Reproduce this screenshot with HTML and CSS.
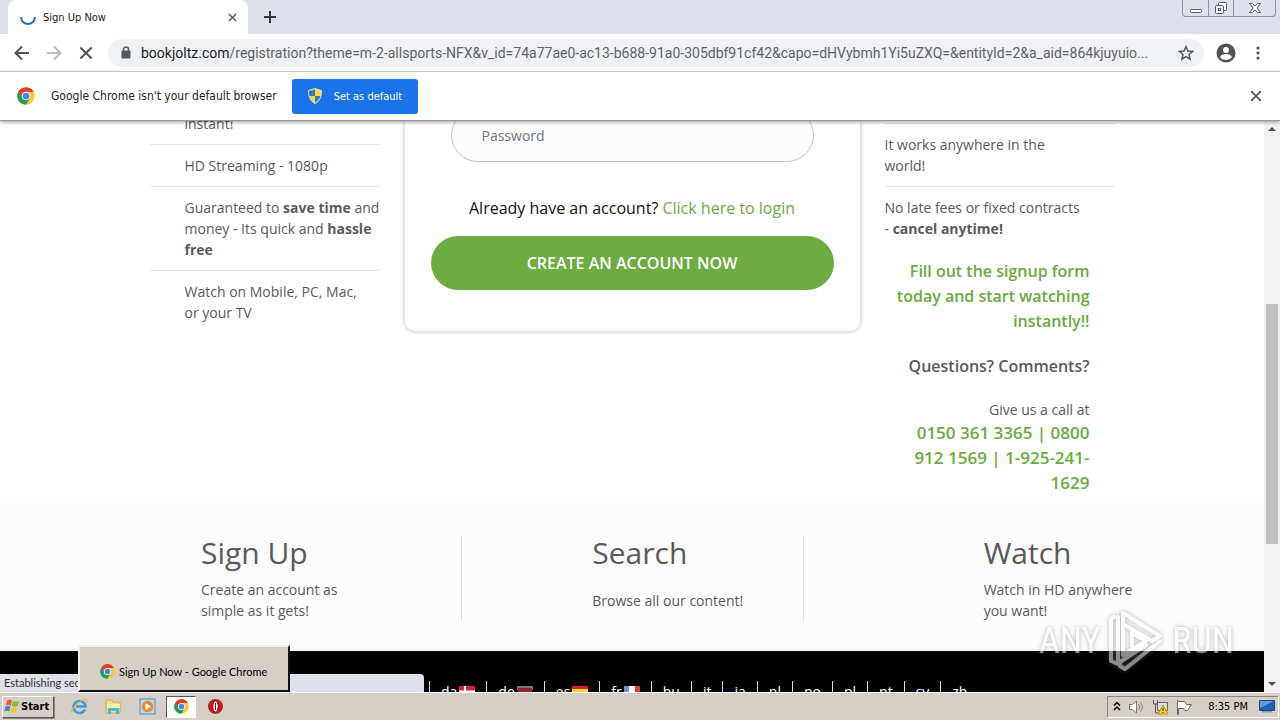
FILE: index.html
```
<!DOCTYPE html>
<html lang="en">
<head>
  <meta charset="UTF-8">
  <title>Sign Up Now</title>
  <link rel="stylesheet" href="styles.css">
</head>
<body>
  <svg class="defs" aria-hidden="true">
    <symbol id="chrome" viewBox="0 0 48 48">
      <circle cx="24" cy="24" r="23" fill="#fbc928"/>
      <path d="M24 24 4.100 12.500A23 23 0 0 1 43.900 12.500H24Z" fill="#df3b30"/>
      <path d="M4.100 12.500A23 23 0 0 0 24 47L34 29.800 24 24 14 29.800Z" fill="#1fa05a"/>
      <path d="M4.100 12.500A23 23 0 0 1 43.900 12.500H24L14 29.800Z" fill="#df3b30"/>
      <path d="M4.100 12.500 14 29.800 24 35.500 17.500 46A23 23 0 0 1 4.100 12.500Z" fill="#1fa05a"/>
      <circle cx="24" cy="24" r="11.500" fill="#fff"/>
      <circle cx="24" cy="24" r="9" fill="#4285f4"/>
    </symbol>
    <symbol id="cross" viewBox="0 0 10 10">
      <path d="M1 1l8 8M9 1l-8 8" fill="none" stroke="currentColor" stroke-width="1.500"/>
    </symbol>
  </svg>

  <header class="tabstrip">
    <div class="tab">
      <svg class="spinner" viewBox="0 0 16 16"><path d="M1 8a7 7 0 0 0 14 0" fill="none" stroke="#3268c8" stroke-width="2"/></svg>
      <span class="tab-title">Sign Up Now</span>
      <button class="icon-btn" aria-label="Close tab"><svg width="9" height="9"><use href="#cross"/></svg></button>
    </div>
    <button class="icon-btn new-tab" aria-label="New tab"><svg width="12" height="12" viewBox="0 0 12 12"><path d="M6 0v12M0 6h12" stroke="#333" stroke-width="2"/></svg></button>
    <div class="window-buttons">
      <button aria-label="Minimize"><svg width="14" height="14" viewBox="0 0 14 14"><rect x="1.500" y="8.500" width="11" height="3" rx="1" fill="#fff" stroke="#555b66"/></svg></button>
      <button aria-label="Restore"><svg width="14" height="14" viewBox="0 0 14 14" fill="#f4f5f8" stroke="#555b66"><rect x="4.500" y="1.500" width="8" height="8" rx="1"/><rect x="1.500" y="4.500" width="8" height="8" rx="1"/><rect x="4.500" y="7.500" width="2" height="2"/></svg></button>
      <button class="wide" aria-label="Close"><svg width="14" height="12" viewBox="0 0 14 12"><path d="M1.500 1.500h3L7 4l2.500-2.500h3L9 6l3.500 4.500h-3L7 8l-2.500 2.500h-3L5 6Z" fill="#fff" stroke="#555b66"/></svg></button>
    </div>
  </header>

  <nav class="toolbar">
    <button class="icon-btn" aria-label="Back"><svg width="16" height="16" viewBox="0 0 16 16"><path d="M15 8H2M8 1.500 1.500 8 8 14.500" fill="none" stroke="#4f5256" stroke-width="2"/></svg></button>
    <button class="icon-btn" aria-label="Forward"><svg width="16" height="16" viewBox="0 0 16 16"><path d="M1 8h13M8 1.500 14.500 8 8 14.500" fill="none" stroke="#b9bbbe" stroke-width="2"/></svg></button>
    <button class="icon-btn" aria-label="Stop"><svg width="14" height="14"><use href="#cross"/></svg></button>
    <div class="omnibox">
      <svg width="10" height="13" viewBox="0 0 10 13"><path d="M2.500 5V3.500a2.500 2.500 0 0 1 5 0V5" fill="none" stroke="#55585c" stroke-width="1.500"/><rect x="0.500" y="4.500" width="9" height="8" rx="1" fill="#55585c"/></svg>
      <label for="url">bookjoltz.com</label>
      <input id="url" type="text" value="/registration?theme=m-2-allsports-NFX&amp;v_id=74a77ae0-ac13-b688-91a0-305dbf91cf42&amp;capo=dHVybmh1Yi5uZXQ=&amp;entityId=2&amp;a_aid=864kjuyuio...">
      <button class="icon-btn" aria-label="Bookmark"><svg width="16" height="16" viewBox="0 0 16 16"><path d="M8 1.500 9.900 6l4.800.4-3.700 3.100 1.100 4.700L8 11.700l-4.100 2.500L5 9.500 1.300 6.400 6.100 6Z" fill="none" stroke="#55585c" stroke-width="1.500"/></svg></button>
    </div>
    <button class="icon-btn" aria-label="Profile"><svg width="20" height="20" viewBox="0 0 20 20"><circle cx="10" cy="10" r="9.500" fill="#505357"/><circle cx="10" cy="7" r="3" fill="#fff"/><path d="M4 14c1.500-4 10.500-4 12 0-2.500 4-9.500 4-12 0Z" fill="#fff"/></svg></button>
    <button class="icon-btn" aria-label="Menu"><svg width="16" height="16" viewBox="0 0 16 16" fill="#505357"><circle cx="8" cy="3" r="1.600"/><circle cx="8" cy="8" r="1.600"/><circle cx="8" cy="13" r="1.600"/></svg></button>
  </nav>

  <div class="infobar">
    <svg width="18" height="18"><use href="#chrome"/></svg>
    <span class="infobar-text">Google Chrome isn't your default browser</span>
    <button class="default-btn">
      <svg width="14" height="16" viewBox="0 0 14 16"><path d="M7 .5 13.500 2.500C13.500 9 12 13 7 15.500 2 13 .5 9 .5 2.500Z" fill="#fbd93e" stroke="#cfd8e2"/><path d="M7 1.500V8H1.500C1 6 1 4 1.200 3ZM7 8h5.500c-.8 3-2.500 5-5.500 6.500Z" fill="#2f78bd"/></svg>
      Set as default
    </button>
    <button class="icon-btn" aria-label="Dismiss"><svg width="12" height="12"><use href="#cross"/></svg></button>
  </div>

  <div class="viewport">
    <main class="page">
      <section class="columns">
        <ul class="perks perks-left">
          <li>instant!</li>
          <li>HD Streaming - 1080p</li>
          <li>Guaranteed to <b>save time</b> and money - Its quick and <b>hassle free</b></li>
          <li>Watch on Mobile, PC, Mac,<br>or your TV</li>
        </ul>

        <form class="card">
          <input class="password" type="password" placeholder="Password" aria-label="Password">
          <p class="login">Already have an account? <a href="#">Click here to login</a></p>
          <button class="create-btn" type="button">CREATE AN ACCOUNT NOW</button>
        </form>

        <div class="side">
          <ul class="perks perks-right">
            <li>It works anywhere in the world!</li>
            <li>No late fees or fixed contracts - <b>cancel anytime!</b></li>
          </ul>
          <div class="contact">
            <p class="big green">Fill out the signup form today and start watching instantly!!</p>
            <p class="big question">Questions? Comments?</p>
            <p>Give us a call at</p>
            <p class="big phones green">0150 361 3365 | 0800 912 1569 | 1-925-241-1629</p>
          </div>
        </div>
      </section>

      <section class="steps">
        <div class="steps-inner">
          <div class="step step-1">
            <h2>Sign Up</h2>
            <p>Create an account as simple as it gets!</p>
          </div>
          <div class="step step-2">
            <h2>Search</h2>
            <p>Browse all our content!</p>
          </div>
          <div class="step step-3">
            <h2>Watch</h2>
            <p>Watch in HD anywhere you want!</p>
          </div>
        </div>
      </section>

      <footer class="footer">
        <ul class="langs">
          <li><a href="#">da<svg class="flag" viewBox="0 0 16 11"><path fill="#d9202e" d="M0 0h16v11H0z"/><path fill="#fff" d="M5 0h2v11H5zM0 4.500h16v2H0z"/></svg></a></li>
          <li><a href="#">de<svg class="flag" viewBox="0 0 16 11"><path fill="#777" d="M0 0h16v4H0z"/><path fill="#8d2630" d="M1 2h14v5H1z"/><path fill="#e8b92c" d="M0 7h16v4H0z"/></svg></a></li>
          <li><a href="#">es<svg class="flag" viewBox="0 0 16 11"><path fill="#d9202e" d="M0 0h16v11H0z"/><path fill="#fbd13a" d="M0 3h16v5H0z"/></svg></a></li>
          <li><a href="#">fr<svg class="flag" viewBox="0 0 16 11"><path fill="#fff" d="M0 0h16v11H0z"/><path fill="#6a93d8" d="M0 0h5v11H0z"/><path fill="#e2383f" d="M11 0h5v11h-5z"/></svg></a></li>
          <li><a href="#">hu</a></li>
          <li><a href="#">it</a></li>
          <li><a href="#">ja</a></li>
          <li><a href="#">nl</a></li>
          <li><a href="#">no</a></li>
          <li><a href="#">pl</a></li>
          <li><a href="#">pt</a></li>
          <li><a href="#">sv</a></li>
          <li><a href="#">zh</a></li>
        </ul>
      </footer>
    </main>

    <div class="scrollbar">
      <svg class="arrow" viewBox="0 0 16 16"><path d="M4 10h8L8 6Z" fill="#505050"/></svg>
      <div class="track-before"></div>
      <div class="thumb"></div>
      <div class="track-after"></div>
      <svg class="arrow" viewBox="0 0 16 16"><path d="M4 6h8l-4 4Z" fill="#505050"/></svg>
    </div>

    <div class="status">Establishing sec</div>
    <div class="preview">
      <svg width="15" height="15"><use href="#chrome"/></svg>
      Sign Up Now - Google Chrome
    </div>

    <div class="watermark">
      <span>ANY</span>
      <svg width="56" height="62" viewBox="0 0 56 62" fill="none" stroke="#fff" stroke-width="4" stroke-linejoin="round" stroke-linecap="round">
        <path d="M6 7 3 9v42l7 3V7"/>
        <path d="M15 45V3l37 23-8 5-29-17M15 45l23-14-14-8v13M52 31 17 59l-5-3V52l26-17"/>
      </svg>
      <span>RUN</span>
    </div>
  </div>

  <div class="taskbar">
    <button class="start">
      <svg width="16" height="15" viewBox="0 0 16 15"><path d="M3 1.500c2-1 3-.8 5 0L6.800 6.500c-2-1-3.300-.8-5 0Z" fill="#e8562a"/><path d="M9 2c2 1 4 1 6 0l-1.300 5c-2 1-4 1-6 0Z" fill="#7dba3c"/><path d="M1.500 7.500c2-1 3-.8 5 0L5.200 12.500c-2-1-3.400-.8-5 0Z" fill="#3f86d8"/><path d="M7.300 8c2 1 4 1 6 0L12 13c-2 1-4 1-6 0Z" fill="#f7c52c"/></svg>
      Start
    </button>
    <button class="launch" aria-label="Internet Explorer"><svg width="17" height="17" viewBox="0 0 17 17"><path d="M14 11.500A6 6 0 1 1 14.500 8.500H5" fill="none" stroke="#3d9bdc" stroke-width="2.600"/><path d="M1 15C-1 11 11 0 15.500 2c1 .6.500 2 0 3" fill="none" stroke="#e2b93a" stroke-width="1.300"/></svg></button>
    <button class="launch" aria-label="Explorer"><svg width="17" height="17" viewBox="0 0 17 17"><path d="M1 2h6l1 2h7v11H1Z" fill="#f3dc83" stroke="#cfae50"/><path d="M2 6h13v4H2z" fill="#fbefb0"/><path d="M3 16v-6h11v6h-3v-3H6v3Z" fill="#55b4dd"/></svg></button>
    <button class="launch" aria-label="Media Player"><svg width="17" height="17" viewBox="0 0 17 17"><rect x="1" y="1" width="15" height="15" fill="#b8d7ef" stroke="#4e90c4"/><circle cx="8.500" cy="8.500" r="5.700" fill="#f08a1c"/><path d="M6.500 5v7l5.500-3.500Z" fill="#fff"/></svg></button>
    <button class="launch active" aria-label="Google Chrome"><svg width="15" height="15"><use href="#chrome"/></svg></button>
    <button class="launch" aria-label="Opera"><svg width="17" height="17" viewBox="0 0 17 17"><circle cx="8.500" cy="8.500" r="7.500" fill="#c31b1f"/><ellipse cx="8.500" cy="8.500" rx="2.700" ry="5.500" fill="#fff" stroke="#7d0b10"/><path d="M8.500 5v7" stroke="#b01418"/></svg></button>

    <div class="tray">
      <svg width="8" height="11" viewBox="0 0 8 11"><path d="M1 4.500 4 1.500l3 3M1 9l3-3 3 3" fill="none" stroke="#000" stroke-width="1.500"/></svg>
      <svg width="17" height="16" viewBox="0 0 17 16" fill="none" stroke="#777"><path d="M1.500 5.500h3L8.500 2v12l-4-3.500h-3Z" fill="#fff"/><path d="M10.500 5c1.500 2 1.500 4 0 6M12.500 3.500c2.500 3 2.500 6 0 9"/></svg>
      <svg width="17" height="16" viewBox="0 0 17 16"><path d="M5.500 3.500h10v8h-10z" fill="#d8dadd" stroke="#666"/><path d="M1.500 1v4h4V1M3.500 5v9h4" fill="none" stroke="#555"/><path d="M11 6l5 9H6Z" fill="#fbd51f" stroke="#b99207"/><path d="M11 9v3M11 13v1" stroke="#222"/></svg>
      <svg width="17" height="16" viewBox="0 0 17 16"><path d="M1.500 1v14.500h1V9.500h5l1 2h3l4-6h-5l-2-3h-6Z" fill="#fff" stroke="#666"/></svg>
      <span class="clock">8:35 PM</span>
      <svg width="16" height="13" viewBox="0 0 16 13"><path d="M.5.500h15v10H.5z" fill="#1f62bd" stroke="#24466f"/><path d="M1 1h14L1 8Z" fill="#5b9de4"/><path d="M3 11h10v1.500H3z" fill="#7d97b5"/></svg>
    </div>
  </div>
</body>
</html>
```
FILE: styles.css
```
* {
  box-sizing: border-box;
}
body {
  margin: 0;
  height: 100vh;
  display: flex;
  flex-direction: column;
  overflow: hidden;
  font-family: 'DejaVu Sans Condensed', 'DejaVu Sans', sans-serif;
  font-stretch: condensed;
  font-size: 11px;
  color: #222;
  background: #fff;
}
button, input {
  font: inherit;
}
ul, p, h2 {
  margin: 0;
  padding: 0;
}
ul {
  list-style: none;
}
svg {
  flex: none;
}
.defs {
  position: absolute;
  width: 0;
  height: 0;
}
.icon-btn {
  display: flex;
  align-items: center;
  justify-content: center;
  width: 20px;
  height: 20px;
  flex: none;
  padding: 0;
  border: 0;
  background: none;
  color: #505357;
}

/* tabs */
.tabstrip {
  display: flex;
  align-items: center;
  height: 34px;
  flex: none;
  padding-left: 8px;
  background: #dee1e9;
}
.tab {
  display: flex;
  align-items: center;
  gap: 7px;
  width: 240px;
  height: 34px;
  padding: 0 6px 0 12px;
  background: #fff;
  border-radius: 8px 8px 0 0;
}
.spinner {
  width: 16px;
  height: 16px;
}
.tab-title {
  flex: 1;
}
.new-tab {
  margin-left: 12px;
}
.window-buttons {
  display: flex;
  align-self: flex-start;
  height: 17px;
  margin-left: auto;
  margin-right: 4px;
  border: 1px solid #8d929c;
  border-top: 0;
  border-radius: 0 0 4px 4px;
}
.window-buttons button {
  display: flex;
  align-items: center;
  justify-content: center;
  width: 25px;
  padding: 0;
  border: 0;
  background: none;
}
.window-buttons button + button {
  border-left: 1px solid #8d929c;
}
.window-buttons .wide {
  width: 42px;
}

/* toolbar */
.toolbar {
  display: flex;
  align-items: center;
  gap: 12px;
  height: 38px;
  flex: none;
  padding: 0 12px;
  border-bottom: 1px solid #dcdcdc;
}
.omnibox {
  display: flex;
  align-items: center;
  flex: 1;
  height: 28px;
  padding: 0 8px 0 13px;
  border-radius: 14px;
  background: #eff2f5;
  font-family: 'Roboto', sans-serif;
  font-stretch: normal;
  font-size: 14px;
}
.omnibox label {
  margin-left: 10px;
}
.omnibox input {
  flex: 1;
  min-width: 0;
  padding: 0;
  border: 0;
  outline: 0;
  background: none;
  color: #5f6368;
}

/* default browser bar */
.infobar {
  display: flex;
  align-items: center;
  height: 49px;
  flex: none;
  padding: 0 14px 0 17px;
  border-bottom: 1px solid #999;
  box-shadow: 0 1px 4px rgba(0,0,0,0.4);
  position: relative;
  z-index: 1;
  background: #fff;
}
.infobar-text {
  margin: 0 15px 0 16px;
  font-size: 12px;
}
.default-btn {
  display: flex;
  align-items: center;
  gap: 12px;
  height: 35px;
  padding: 0 16px;
  border: 0;
  border-radius: 3px;
  background: #1a73e8;
  color: #fff;
}
.infobar .icon-btn {
  margin-left: auto;
}

/* page */
.viewport {
  position: relative;
  display: flex;
  flex: 1;
  min-height: 0;
}
.page {
  flex: 1;
  overflow: hidden;
  font-family: 'Open Sans', sans-serif;
  font-stretch: normal;
  font-size: 14px;
  line-height: 21px;
  color: #5a5a5a;
}
.columns {
  display: grid;
  grid-template-columns: 230px 455px 230px;
  gap: 25px;
  align-items: start;
  justify-content: center;
  margin-top: -18px;
  padding-bottom: 8px;
}
.perks li {
  padding: 10px 0;
}
.perks li + li {
  border-top: 1px solid #e2e2e2;
}
.perks-left li {
  padding-left: 35px;
}
.perks-right {
  margin-top: 20px;
  border-top: 1px solid #e2e2e2;
}
.perks-right li {
  padding-right: 28px;
}
.card {
  padding: 5px 26px 41px;
  border-radius: 10px;
  box-shadow: 0 0 5px rgba(0,0,0,0.3);
  text-align: center;
}
.password {
  display: block;
  width: calc(100% - 40px);
  height: 54px;
  margin: 0 auto 34px;
  padding: 0 30px;
  border: 1px solid #c4c4c4;
  border-radius: 27px;
  background: #fcfcfc;
}
.password::placeholder {
  color: #6c757d;
}
.login {
  margin-bottom: 16px;
  font-size: 16px;
  line-height: 24px;
  color: #111;
}
.login a {
  color: #6aaa3e;
  text-decoration: none;
}
.create-btn {
  width: 100%;
  height: 54px;
  border: 0;
  border-radius: 27px;
  background: #6cac40;
  color: #fff;
  font-size: 16px;
  font-weight: 600;
}
.contact {
  padding: 10px 25px 0 0;
  text-align: right;
}
.big {
  font-size: 16px;
  font-weight: 600;
  line-height: 25px;
}
.phones {
  font-size: 17px;
}
.green {
  color: #6aaa3e;
}
.question {
  margin: 20px 0;
}

/* steps */
.steps {
  padding: 33px 0 30px;
  background: #fcfcfc;
}
.steps-inner {
  display: grid;
  grid-template-columns: repeat(3, 1fr);
  max-width: 1024px;
  margin: 0 auto;
}
.step + .step {
  border-left: 1px solid #ddd;
}
.step h2 {
  margin-bottom: 9px;
  font-size: 30px;
  font-weight: 400;
  line-height: 34px;
}
.step p {
  display: flex;
  align-items: center;
  max-width: 165px;
  min-height: 42px;
}
.step-1 {
  padding-left: 81px;
}
.step-2 {
  padding-left: 130px;
}
.step-3 {
  padding-left: 180px;
}

/* footer */
.footer {
  padding: 30px 0 30px 429px;
  background: #000;
}
.langs {
  display: flex;
}
.langs li {
  padding: 0 11px;
  border-left: 1px solid #ddd;
}
.langs a {
  color: #fff;
  text-decoration: none;
}
.flag {
  width: 16px;
  height: 11px;
  margin-left: 2px;
}

/* scrollbar */
.scrollbar {
  display: flex;
  flex-direction: column;
  width: 16px;
  padding: 0 2px;
  background: #f1f1f1;
}
.arrow {
  width: 16px;
  height: 16px;
  margin: 0 -2px;
}
.track-before {
  flex: 62;
}
.thumb {
  flex: 89;
  background: #c1c1c1;
}
.track-after {
  flex: 49;
}

/* overlays */
.status {
  position: absolute;
  left: 0;
  bottom: 0;
  width: 424px;
  height: 18px;
  padding-left: 4px;
  border-radius: 0 4px 0 0;
  background: #dee1e9;
  font-family: 'Lato', sans-serif;
  font-stretch: normal;
  line-height: 18px;
  color: #333;
}
.preview {
  position: absolute;
  left: 78px;
  bottom: 0;
  display: flex;
  align-items: center;
  gap: 4px;
  width: 212px;
  height: 47px;
  padding: 6px 0 0 20px;
  border: 2px outset #eee;
  border-color: #f4f1ec #666 #666 #f4f1ec;
  background: #d6cfc7;
  font-family: 'Lato', sans-serif;
  font-stretch: normal;
  color: #000;
}
.watermark {
  position: absolute;
  right: 46px;
  bottom: 20px;
  display: flex;
  align-items: center;
  gap: 8px;
  opacity: 0.55;
  color: #fff;
  font-family: 'Liberation Sans Narrow', 'Roboto', sans-serif;
  font-size: 36px;
  filter: drop-shadow(0 0 2px #777);
}

/* taskbar */
.taskbar {
  display: flex;
  align-items: center;
  height: 28px;
  flex: none;
  padding: 0 1px 0 2px;
  border-top: 1px solid #fff;
  background: #d6cfc7;
}
.start {
  display: flex;
  align-items: center;
  gap: 1px;
  width: 52px;
  height: 22px;
  margin-right: 10px;
  padding: 0 1px;
  border: 1px solid;
  border-color: #fff #555 #555 #fff;
  background: #d6cfc7;
  box-shadow: 1px 1px 0 #8a857e;
  font-size: 11px;
  font-weight: bold;
  color: #000;
}
.launch {
  display: flex;
  align-items: center;
  justify-content: center;
  width: 30px;
  height: 22px;
  margin-right: 4px;
  padding: 0;
  border: 1px solid transparent;
  background: none;
}
.launch.active {
  border-color: #555 #fff #fff #555;
  background: #fff;
}
.tray {
  display: flex;
  align-items: center;
  gap: 7px;
  height: 22px;
  margin-left: auto;
  padding: 0 3px 0 5px;
  border: 1px solid;
  border-color: #8a857e #fff #fff #8a857e;
  color: #000;
}
.clock {
  margin: 0 4px 0 8px;
}
```
